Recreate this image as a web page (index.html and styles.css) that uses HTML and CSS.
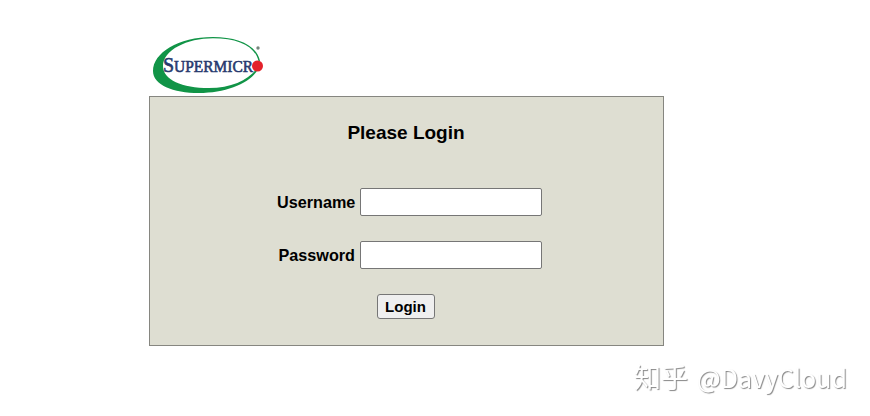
FILE: index.html
```
<!DOCTYPE html>
<html>
<head>
    <meta charset="utf-8">
    <title>Login</title>
    <link rel="stylesheet" href="styles.css">
</head>
<body>
    <div class="container">
        <svg class="logo" width="116" height="60" viewBox="0 0 116 60">
            <path class="swoosh" fill-rule="evenodd" d="M111 25 C108 9 88 1 64 1 C29 1 4 17 4 35 C4 49 24 57 50 57 C77 57 102 47 109 33 L107.5 33 C99 44 82 52 60 52 C33 52 14 44 14 30 C14 14 38 2.2 64 2.2 C89 2.2 106 10 109.5 25 Z"/>
            <text class="brand" x="14" y="36" textLength="90" lengthAdjust="spacingAndGlyphs"><tspan class="big">S</tspan>UPERMICR</text>
            <circle class="dot" cx="108.5" cy="30" r="5.5"/>
            <circle class="mark" cx="109" cy="12" r="1.7"/>
        </svg>
        <form class="login">
            <h3>Please Login</h3>
            <div class="row">
                <label for="username">Username</label>
                <input type="text" id="username">
            </div>
            <div class="row">
                <label for="password">Password</label>
                <input type="password" id="password">
            </div>
            <button type="button" class="btn">Login</button>
        </form>
    </div>
    <div class="watermark">知乎 <span>@DavyCloud</span></div>
</body>
</html>
```

FILE: styles.css
```
body {
    margin: 0;
    background: #fff;
    color: #000;
    font-family: "Liberation Sans", Arial, sans-serif;
}

.container {
    width: 515px;
    margin-left: 149px;
    padding-top: 36px;
}

.logo {
    display: block;
}

.swoosh {
    fill: #119447;
}

.brand {
    font-family: "Liberation Serif", serif;
    font-size: 17px;
    fill: #27396e;
    stroke: #27396e;
    stroke-width: 0.6;
}

.big {
    font-size: 22px;
}

.dot {
    fill: #e3222b;
}

.mark {
    fill: #75857c;
}

.login {
    display: flex;
    flex-direction: column;
    align-items: center;
    box-sizing: border-box;
    height: 250px;
    border: 1px solid #868680;
    background-color: #deded2;
}

h3 {
    margin: 25px 1px 44px 0;
    font-size: 19px;
    line-height: 22px;
}

.row {
    display: flex;
    align-items: center;
    gap: 5px;
    width: 265px;
    height: 28px;
    margin: 0 0 25px 6px;
}

label {
    flex: 1;
    font-size: 16.2px;
    font-weight: bold;
    line-height: 18px;
    text-align: right;
}

input {
    box-sizing: border-box;
    width: 182px;
    height: 28px;
    border: 1px solid #767676;
    border-radius: 2px;
    background: #fff;
}

.btn {
    box-sizing: border-box;
    width: 58px;
    height: 25px;
    margin-right: 2px;
    padding: 0;
    border: 1px solid #767676;
    border-radius: 3px;
    background-color: #efefef;
    color: #000;
    font: bold 15px "Liberation Sans", Arial, sans-serif;
}

.watermark {
    position: absolute;
    left: 634px;
    top: 358px;
    color: #fff;
    font-family: "Noto Sans CJK SC", sans-serif;
    font-size: 27px;
    line-height: 38px;
    white-space: nowrap;
    text-shadow: 1px 1px 1px #888;
    will-change: transform;
}

.watermark span {
    margin-left: 3px;
    font-size: 25px;
}
```
